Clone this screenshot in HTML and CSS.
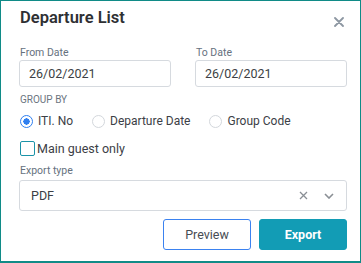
FILE: index.html
```html
<!DOCTYPE html>
<html>
<head>
<meta charset="utf-8">
<link rel="stylesheet" href="styles.css">
</head>
<body>
<div class="dialog">
  <div class="header">
    <h1 class="title">Departure List</h1>
    <button class="close" aria-label="Close">
      <svg width="10" height="10" viewBox="0 0 10 10"><path d="M1 1L9 9M9 1L1 9" stroke="#8d97a2" stroke-width="1.8" stroke-linecap="round"/></svg>
    </button>
  </div>
  <div class="dates">
    <div class="field">
      <label class="label">From Date</label>
      <div class="input">26/02/2021</div>
    </div>
    <div class="field">
      <label class="label">To Date</label>
      <div class="input">26/02/2021</div>
    </div>
  </div>
  <div class="group-label">GROUP BY</div>
  <div class="radios">
    <div class="radio checked"><span class="dot"></span><span>ITI. No</span></div>
    <div class="radio"><span class="dot"></span><span>Departure Date</span></div>
    <div class="radio"><span class="dot"></span><span>Group Code</span></div>
  </div>
  <div class="check"><span class="box"></span><span>Main guest only</span></div>
  <label class="label export-label">Export type</label>
  <div class="select">
    <span class="value">PDF</span>
    <span class="icons">
      <svg width="9" height="9" viewBox="0 0 9 9"><path d="M1 1L8 8M8 1L1 8" stroke="#8a8f95" stroke-width="1.3"/></svg>
      <svg width="10" height="6" viewBox="0 0 10 6"><path d="M1 1L5 5L9 1" fill="none" stroke="#8a8f95" stroke-width="1.6"/></svg>
    </span>
  </div>
  <div class="actions">
    <button class="btn preview">Preview</button>
    <button class="btn export">Export</button>
  </div>
</div>
</body>
</html>
```
FILE: styles.css
```css
* { box-sizing: border-box; }
body { margin: 0; font-family: Roboto, "Noto Sans", sans-serif; background: #fff; }
.dialog {
  width: 361px; height: 263px;
  border: 1px solid #108b87; border-bottom-width: 2px;
  padding: 7px 13px 0 18px;
  background: #fff;
  display: flex; flex-direction: column;
}
.header { display: flex; justify-content: space-between; align-items: flex-start; height: 29px; }
.title { margin: 0 0 0 1px; font-size: 16.5px; font-weight: 600; color: #2e3033; line-height: 20px; }
.close { border: 0; background: none; padding: 0; margin-right: 3px; margin-top: 9px; width: 10px; height: 10px; display: flex; }
.dates { display: flex; gap: 24px; margin-top: 9px; }
.field { flex: 1; display: flex; flex-direction: column; }
.label { font-size: 10.5px; color: #66717e; line-height: 13px; margin-left: 1px; }
.input {
  margin-top: 1px; height: 27px; border: 1px solid #d6dadf; border-radius: 3px;
  padding: 0 9px; display: flex; align-items: center;
  font-size: 12.5px; color: #3c3f44;
}
.group-label { margin-top: 6px; margin-left: 1px; font-size: 10px; color: #6b7480; line-height: 13px; }
.radios { display: flex; align-items: center; margin-top: 5px; height: 20px; font-size: 12px; color: #3c4046; }
.radio { display: flex; align-items: center; gap: 5px; margin-right: 18px; }
.radio .dot { width: 13px; height: 13px; border: 1px solid #d3d7dc; border-radius: 50%; margin-left: 1px; }
.radio.checked .dot { border: 1.5px solid #2f7ff0; background: radial-gradient(circle, #2f7ff0 0 3px, #fff 3.3px); }
.check { display: flex; align-items: center; gap: 2px; margin-top: 10px; font-size: 12.5px; color: #3c4046; height: 15px; }
.check .box { width: 15px; height: 15px; border: 1.5px solid #1b93a8; border-radius: 2px; margin-left: 1px; }
.export-label { margin-top: 8px; }
.select {
  margin-top: 3px; height: 31px; border: 1px solid #d6dadf; border-radius: 3px;
  display: flex; align-items: center; justify-content: space-between;
  padding: 0 12px 0 11px; font-size: 12.5px; color: #3c3f44;
}
.icons { display: flex; align-items: center; gap: 16px; }
.actions { display: flex; justify-content: flex-end; gap: 8px; margin-top: 8px; }
.btn { width: 88px; height: 31px; border-radius: 3px; font-family: inherit; font-size: 12.5px; }
.preview { background: #fff; border: 1px solid #3b82f0; color: #474c53; }
.export { background: #129cb5; border: 1px solid #129cb5; color: #fff; font-weight: 700; }
```
